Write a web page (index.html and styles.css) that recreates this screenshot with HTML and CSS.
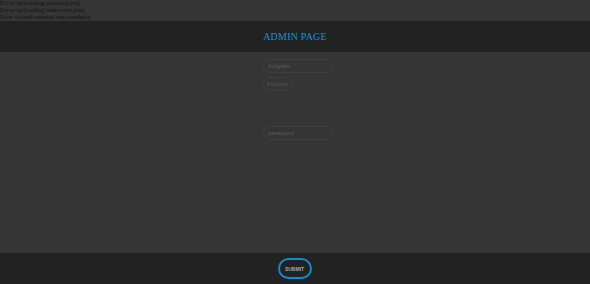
FILE: index.html
```html
<!DOCTYPE html>
<html lang="en">
<head>
  <meta charset="UTF-8">
  <meta name="viewport" content="width=device-width, initial-scale=1.0">
  <title>Admin Page</title>
  <link rel="stylesheet" href="styles.css">
</head>
<body>

  <div class="messages">
    Error uploading untitled.png<br>
    Error uploading unknown.png<br>
    New record created successfully
  </div>

  <header class="topbar">
    <h1>Admin Page</h1>
  </header>

  <form class="admin-form">
    <input type="text" class="field" placeholder="Aufgabe">
    <label class="pictures">Pictures</label>
    <div class="spacer"></div>
    <input type="password" class="field" placeholder="password">
  </form>

  <footer class="bottombar">
    <button type="button" class="submit">SUBMIT</button>
  </footer>

</body>
</html>
```

FILE: styles.css
```css
body {
  margin: 0;
  background-color: #353535;
  height: 284px;
  overflow: hidden;
  font-family: "Liberation Serif", serif;
}

.messages {
  font-size: 7px;
  line-height: 7px;
  color: #141414;
  height: 21px;
}

.topbar {
  background-color: #222;
  height: 31px;
  display: flex;
  align-items: center;
  justify-content: center;
}

.topbar h1 {
  margin: 0;
  font-size: 10px;
  font-weight: normal;
  text-transform: uppercase;
  color: #1590d8;
  letter-spacing: 0.2px;
  padding-bottom: 1px;
}

.admin-form {
  display: flex;
  flex-direction: column;
  align-items: flex-start;
  width: 70px;
  margin: 7px 0 0 263px;
  gap: 4px;
}

.field {
  width: 70px;
  height: 14px;
  box-sizing: border-box;
  background: transparent;
  border: 1px solid #3e3e3e;
  border-radius: 8px;
  padding: 0 4px;
  font-family: "Liberation Sans", sans-serif;
  font-size: 6px;
  color: #555;
  outline: none;
}

.field::placeholder {
  color: #595959;
}

.pictures {
  height: 14px;
  box-sizing: border-box;
  border: 1px solid #3e3e3e;
  border-radius: 8px;
  padding: 0 3px;
  font-family: "Liberation Sans", sans-serif;
  font-size: 6px;
  line-height: 12px;
  color: #595959;
}

.spacer {
  height: 27px;
}

.bottombar {
  position: fixed;
  left: 0;
  right: 0;
  bottom: 0;
  height: 31px;
  background-color: #222;
  display: flex;
  align-items: center;
  justify-content: center;
}

.submit {
  width: 34px;
  height: 21px;
  margin-left: -1px;
  background: transparent;
  border: 2px solid #1488cc;
  border-radius: 11px;
  color: #a8a8a8;
  font-family: "Liberation Sans", sans-serif;
  font-size: 5px;
  font-weight: bold;
  padding: 0;
}
```
